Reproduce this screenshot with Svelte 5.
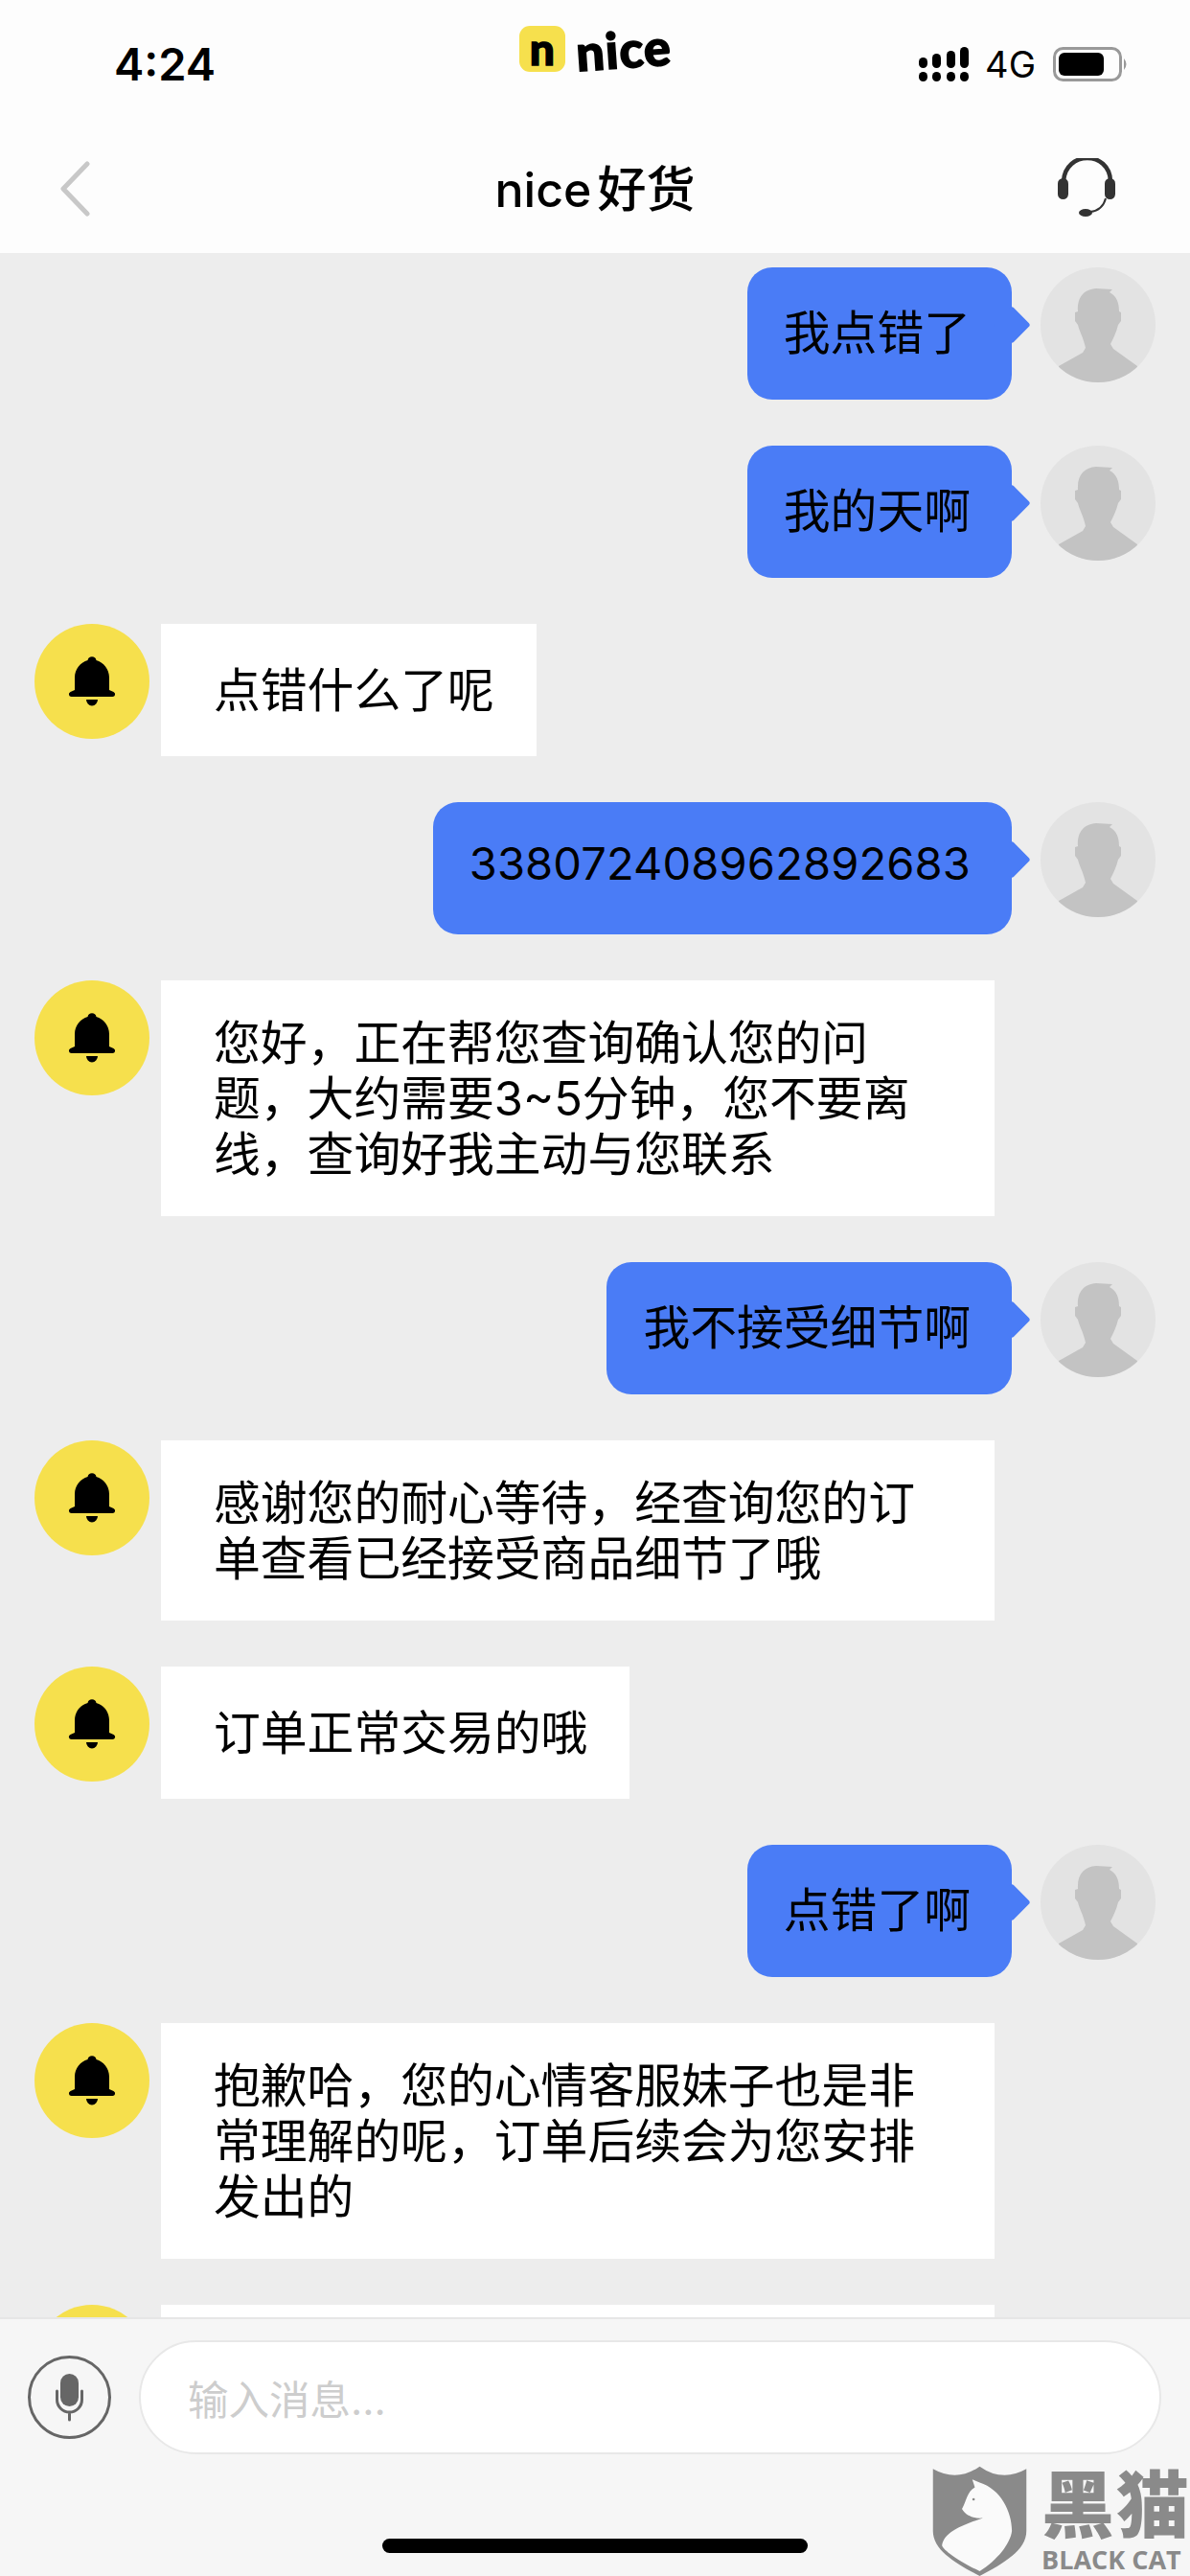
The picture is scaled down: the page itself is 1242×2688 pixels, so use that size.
<script>
	// 대화 내용: from 'me' 는 파란 말풍선, 'bot' 은 흰 말풍선
	const messages = [
		{ from: 'me', lines: ['我点错了'] },
		{ from: 'me', lines: ['我的天啊'] },
		{ from: 'bot', lines: ['点错什么了呢'] },
		{ from: 'me', lines: ['338072408962892683'] },
		{ from: 'bot', lines: ['您好，正在帮您查询确认您的问', '题，大约需要3~5分钟，您不要离', '线，查询好我主动与您联系'] },
		{ from: 'me', lines: ['我不接受细节啊'] },
		{ from: 'bot', lines: ['感谢您的耐心等待，经查询您的订', '单查看已经接受商品细节了哦'] },
		{ from: 'bot', lines: ['订单正常交易的哦'] },
		{ from: 'me', lines: ['点错了啊'] },
		{ from: 'bot', lines: ['抱歉哈，您的心情客服妹子也是非', '常理解的呢，订单后续会为您安排', '发出的'] },
		{ from: 'bot', lines: [], cut: true }
	];

	const is_digits = (line) => /^\d+$/.test(line);
</script>

<div class="screen">
	<header class="top">
		<div class="status">
			<span class="time">4:24</span>
			<div class="brand">
				<span class="brand-mark">n</span>
				<span class="brand-name">nice</span>
			</div>
			<div class="status-right">
				<svg class="signal" width="55" height="40" viewBox="956 46 55 40">
					<g fill="#000">
						<rect x="958" y="59" width="9" height="11" rx="4.5" />
						<rect x="972" y="55" width="9" height="15" rx="4.5" />
						<rect x="987" y="52" width="9" height="18" rx="4.5" />
						<rect x="1001" y="48" width="9" height="22" rx="4.5" />
						<rect x="958" y="74" width="9" height="10" rx="4.5" />
						<rect x="972" y="74" width="9" height="10" rx="4.5" />
						<rect x="987" y="74" width="9" height="10" rx="4.5" />
						<rect x="1001" y="74" width="9" height="10" rx="4.5" />
					</g>
				</svg>
				<span class="net">4G</span>
				<svg class="battery" width="80" height="38" viewBox="1097 48 80 38">
					<rect x="1099.5" y="50.5" width="69" height="33" rx="9" fill="none" stroke="#999" stroke-width="3" />
					<rect x="1104" y="55" width="47" height="24" rx="6" fill="#000" />
					<path d="M1172 61 q5 6 0 12z" fill="#999" />
				</svg>
			</div>
		</div>
		<nav class="nav">
			<svg class="back" width="34" height="58" viewBox="0 0 34 58">
				<path d="M30 3 L5 29 L30 55" fill="none" stroke="#c8c8c8" stroke-width="5" stroke-linecap="round" stroke-linejoin="round" />
			</svg>
			<h1 class="title"><span class="title-latin">nice</span>好货</h1>
			<svg class="headset" width="66" height="64" viewBox="1101 166 66 64">
				<path d="M1110 190 C1112 158 1158 158 1159 190" fill="none" stroke="#333" stroke-width="4.5" />
				<rect x="1104" y="187" width="11" height="22" rx="5.5" fill="#333" />
				<rect x="1153" y="187" width="11" height="22" rx="5.5" fill="#333" />
				<path d="M1154 208 C1152 216 1146 221 1138 222" fill="none" stroke="#333" stroke-width="2" />
				<ellipse cx="1133" cy="223" rx="7" ry="4" fill="#333" />
			</svg>
		</nav>
	</header>

	<main class="chat">
		{#each messages as m}
			<div class="row {m.from}">
				{#if m.from === 'bot'}
					<svg class="avatar" width="120" height="120" viewBox="0 0 120 120">
						<circle cx="60" cy="60" r="60" fill="#f6e04d" />
						<path
							d="M42 69 V56 C42 47 48 40 55.5 38 a4.6 4.6 0 0 1 9 0 C72 40 78 47 78 56 V69 L82.5 71 a2.6 2.6 0 0 1 -1 5 H38.500 a2.6 2.6 0 0 1 -1 -5 Z M54 79 H66 a6 6.500 0 0 1 -12 0 Z"
							fill="#000"
						/>
					</svg>
				{/if}
				<div class="bubble" class:multi={m.lines.length > 1 || m.cut}>
					{#each m.lines as line}
						<div class:digits={is_digits(line)}>{line}</div>
					{/each}
				</div>
				{#if m.from === 'me'}
					<svg class="avatar" width="120" height="120" viewBox="0 0 120 120">
						<defs>
							<clipPath id="round"><circle cx="60" cy="60" r="60" /></clipPath>
						</defs>
						<circle cx="60" cy="60" r="60" fill="#e3e3e3" />
						<path
							clip-path="url(#round)"
							d="M39 46 C38 30 46 23 58 22 L75 23 L72 26 C80 30 82 38 82 46 L84 47 V56 L81 60 C79 68 76 74 73 80 L76 85 L101 103 V120 H19 V103 L44 89 L47 84 C45 74 41 68 39 60 L36 56 V47 Z"
							fill="#c3c3c3"
						/>
					</svg>
				{/if}
			</div>
		{/each}
	</main>

	<footer class="composer">
		<svg class="mic" width="87" height="87" viewBox="0 0 87 87">
			<circle cx="43.500" cy="43.500" r="42" fill="none" stroke="#666" stroke-width="3" />
			<rect x="34" y="19" width="19" height="34" rx="9.500" fill="#666" />
			<path d="M30.500 37 V46 a13 13 0 0 0 26 0 V37 M43.500 59 V67" fill="none" stroke="#666" stroke-width="3" stroke-linecap="round" />
		</svg>
		<div class="input">输入消息...</div>
	</footer>

	<div class="home-bar"></div>

	<div class="watermark">
		<svg class="shield" width="105" height="116" viewBox="90 95 310 345">
			<path d="M100 108 Q175 150 245 100 Q315 150 390 108 V300 C390 360 320 400 245 440 C170 400 100 360 100 300 Z" fill="#8a8a8a" />
			<path d="M222 140 L245 150 C310 170 345 240 345 300 C340 340 300 390 245 425 C190 400 130 360 128 345 C135 300 200 280 255 260 C235 262 205 258 190 232 C205 205 205 180 230 165 Z" fill="#fafafa" />
			<circle cx="226" cy="202" r="4" fill="#8a8a8a" />
		</svg>
		<div class="mark-text">
			<span class="mark-cn">黑猫</span>
			<span class="mark-en">BLACK CAT</span>
		</div>
	</div>
</div>

<style>
	:global(body) {
		margin: 0;
	}

	.screen {
		position: relative;
		width: 1242px;
		height: 2688px;
		display: flex;
		flex-direction: column;
		overflow: hidden;
		background: #ededed;
		font-family: Inter, 'Noto Sans CJK SC', sans-serif;
		color: #000;
	}

	.top {
		flex: none;
		height: 264px;
		background: #fdfdfd;
	}

	.status {
		height: 110px;
		display: grid;
		grid-template-columns: 1fr auto 1fr;
		align-items: start;
	}

	.time {
		margin: 41px 0 0 119px;
		font-size: 47px;
		line-height: 52px;
		font-weight: 600;
	}

	.brand {
		display: flex;
		align-items: center;
		gap: 11px;
		margin-top: 27px;
	}

	.brand-mark {
		width: 48px;
		height: 48px;
		border-radius: 11px;
		background: #f6e04d;
		display: flex;
		align-items: center;
		justify-content: center;
		font-family: Lato, sans-serif;
		font-size: 46px;
		font-weight: 900;
		line-height: 44px;
		-webkit-text-stroke: 1.5px #000;
	}

	.brand-name {
		font-family: Lato, sans-serif;
		font-size: 52px;
		font-weight: 900;
		line-height: 48px;
		letter-spacing: 1px;
		-webkit-text-stroke: 1.5px #000;
		transform: rotate(-4deg);
	}

	.status-right {
		display: flex;
		align-items: center;
		justify-content: flex-end;
		height: 40px;
		margin: 47px 64px 0 0;
	}

	.signal {
		margin-right: 16px;
	}

	.net {
		font-size: 38px;
		line-height: 40px;
		margin-right: 17px;
	}

	.nav {
		height: 154px;
		display: grid;
		grid-template-columns: 1fr auto 1fr;
		align-items: center;
	}

	.back {
		margin-left: 61px;
		margin-top: 20px;
	}

	.title {
		margin: 22px 0 0;
		font-size: 51px;
		font-weight: 500;
		line-height: 60px;
	}

	.title-latin {
		margin-right: 6px;
		font-size: 50px;
	}

	.headset {
		justify-self: end;
		margin-right: 75px;
		margin-top: 20px;
	}

	.chat {
		flex: 1;
		min-height: 0;
		overflow: hidden;
		display: flex;
		flex-direction: column;
		gap: 48px;
		padding: 15px 36px 0;
	}

	.row {
		flex: none;
		display: flex;
		align-items: flex-start;
		gap: 12px;
	}

	.row.me {
		justify-content: flex-end;
		gap: 30px;
	}

	.avatar {
		flex: none;
	}

	.bubble {
		position: relative;
		min-height: 138px;
		box-sizing: border-box;
		display: flex;
		flex-direction: column;
		justify-content: center;
		font-size: 48.8px;
		line-height: 58px;
		white-space: nowrap;
	}

	.digits {
		margin-top: -10px;
		font-size: 47px;
		letter-spacing: 0.15px;
	}

	.bot .bubble {
		background: #fff;
		padding: 37px 44px 35px 55px;
	}

	.bot .bubble.multi {
		width: 870px;
	}

	.me .bubble {
		background: #4a7cf6;
		border-radius: 26px;
		padding: 0 43px 0 38px;
	}

	/* 말풍선 꼬리 */
	.me .bubble::after {
		content: '';
		position: absolute;
		right: -14px;
		top: 46px;
		width: 28px;
		height: 28px;
		border-radius: 3px;
		background: #4a7cf6;
		transform: rotate(45deg);
	}

	.composer {
		flex: none;
		height: 270px;
		box-sizing: border-box;
		border-top: 2px solid #e6e6e6;
		background: #f6f6f6;
		display: flex;
		align-items: flex-start;
		gap: 29px;
		padding: 22px 30px 0 29px;
	}

	.mic {
		flex: none;
		margin-top: 16px;
	}

	.input {
		flex: 1;
		height: 119px;
		box-sizing: border-box;
		border: 2px solid #e8e8e8;
		border-radius: 60px;
		background: #fff;
		display: flex;
		align-items: center;
		padding-left: 49px;
		font-size: 42.500px;
		color: #cdcdcd;
	}

	.home-bar {
		position: absolute;
		left: 399px;
		top: 2649px;
		width: 444px;
		height: 15px;
		border-radius: 8px;
		background: #000;
	}

	.watermark {
		position: absolute;
		left: 970px;
		top: 2572px;
		display: flex;
		gap: 12px;
	}

	.mark-text {
		display: flex;
		flex-direction: column;
		color: #8a8a8a;
	}

	.mark-cn {
		font-size: 76px;
		font-weight: 900;
		line-height: 84px;
		letter-spacing: 2px;
		white-space: nowrap;
	}

	.mark-en {
		margin-top: 2px;
		font-family: 'Open Sans', sans-serif;
		font-size: 27px;
		font-weight: 700;
		line-height: 26px;
		white-space: nowrap;
	}
</style>
